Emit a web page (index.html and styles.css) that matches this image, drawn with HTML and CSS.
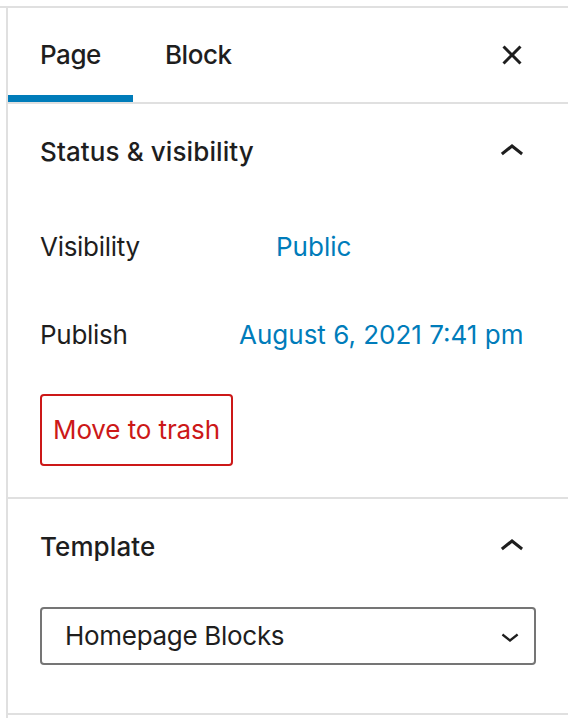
FILE: index.html
```html
<!DOCTYPE html>
<html lang="en">
<head>
<meta charset="utf-8">
<title>Page settings</title>
<link rel="stylesheet" href="styles.css">
</head>
<body>
<div class="frame">
  <aside class="sidebar">
    <div class="tabs">
      <div class="tab is-active">Page</div>
      <div class="tab">Block</div>
      <button class="close" aria-label="Close settings">
        <svg viewBox="0 0 24 24" width="48" height="48"><path d="M12 13.06l3.712 3.713 1.061-1.06L13.061 12l3.712-3.712-1.06-1.06L12 10.938 8.288 7.227 7.227 8.288 10.939 12l-3.712 3.712 1.06 1.061L12 13.061z"/></svg>
      </button>
    </div>

    <section class="panel panel-status">
      <div class="panel-header">
        <span class="panel-title">Status &amp; visibility</span>
        <svg class="chev" viewBox="0 0 24 24" width="48" height="48"><path d="M6.5 12.4L12 8l5.5 4.4-.9 1.2L12 10l-4.6 3.6-1-1.2z"/></svg>
      </div>
      <div class="panel-body">
        <div class="row row-first">
          <span class="label">Visibility</span>
          <span class="value value-public">Public</span>
        </div>
        <div class="row">
          <span class="label">Publish</span>
          <span class="value">August 6, 2021 7:41 pm</span>
        </div>
        <div class="row-trash">
          <button class="trash">Move to trash</button>
        </div>
      </div>
    </section>

    <section class="panel panel-template">
      <div class="panel-header">
        <span class="panel-title">Template</span>
        <svg class="chev" viewBox="0 0 24 24" width="48" height="48"><path d="M6.5 12.4L12 8l5.5 4.4-.9 1.2L12 10l-4.6 3.6-1-1.2z"/></svg>
      </div>
      <div class="panel-body">
        <div class="select">
          <span class="select-text">Homepage Blocks</span>
          <svg class="select-chev" viewBox="0 0 24 24" width="36" height="36"><path d="M17.5 11.6L12 16l-5.5-4.4.9-1.2L12 14l4.6-3.6 1 1.2z"/></svg>
        </div>
      </div>
    </section>
  </aside>
</div>
</body>
</html>
```

FILE: styles.css
```css
* { box-sizing: border-box; }

html, body {
  margin: 0;
  background: #fff;
}

body {
  padding-top: 6px;
  font-family: Inter, "Noto Sans", "Liberation Sans", sans-serif;
  color: #1e1e1e;
  font-size: 26px;
}

.frame {
  border-top: 2px solid #e0e0e0;
  padding-left: 6px;
}

.sidebar {
  border-left: 2px solid #e0e0e0;
  min-height: 712px;
}

.tabs {
  display: flex;
  align-items: stretch;
  height: 96px;
  border-bottom: 2px solid #e0e0e0;
  padding-right: 32px;
}

.tab {
  display: flex;
  align-items: center;
  padding: 0 32px;
  font-weight: 500;
  line-height: 1;
  letter-spacing: -0.45px;
}

.tab.is-active {
  box-shadow: inset 0 -7px 0 #007cba;
}

.close {
  margin-left: auto;
  align-self: center;
  border: 0;
  background: none;
  padding: 0;
  width: 48px;
  height: 48px;
  display: flex;
  fill: #1e1e1e;
}

.panel {
  border-bottom: 2px solid #e0e0e0;
}

.panel-header {
  height: 96px;
  padding: 0 32px;
  display: flex;
  align-items: center;
  justify-content: space-between;
}

.panel-title {
  font-weight: 500;
  line-height: 1;
  letter-spacing: 0.1px;
}

.chev {
  fill: #1e1e1e;
  display: block;
}

.panel-body {
  padding: 0 32px;
}

.panel-status .panel-body {
  padding-top: 11px;
  padding-bottom: 31px;
}

.panel-template .panel-body {
  padding-top: 12px;
  padding-bottom: 48px;
}

.row {
  display: flex;
  align-items: center;
  height: 72px;
  margin-top: 16px;
  line-height: 1;
}

.row-first { margin-top: 0; }

.label {
  width: 199px;
  flex-shrink: 0;
  letter-spacing: -0.3px;
}

.value {
  color: #007cba;
}

.value-public {
  padding-left: 37px;
}

.row-trash {
  margin-top: 23px;
  display: flex;
}

.trash {
  font: inherit;
  line-height: 1;
  letter-spacing: -0.1px;
  color: #cc1818;
  background: #fff;
  border: 2px solid #cc1818;
  border-radius: 4px;
  height: 72px;
  padding: 0 11px;
  display: flex;
  align-items: center;
}

.select {
  height: 58px;
  border: 2px solid #757575;
  border-radius: 4px;
  display: flex;
  align-items: center;
  padding-left: 23px;
  padding-right: 6px;
  line-height: 1;
  letter-spacing: -0.3px;
}

.select-text {
  flex: 1;
}

.select-chev {
  fill: #1e1e1e;
  display: block;
}
```
